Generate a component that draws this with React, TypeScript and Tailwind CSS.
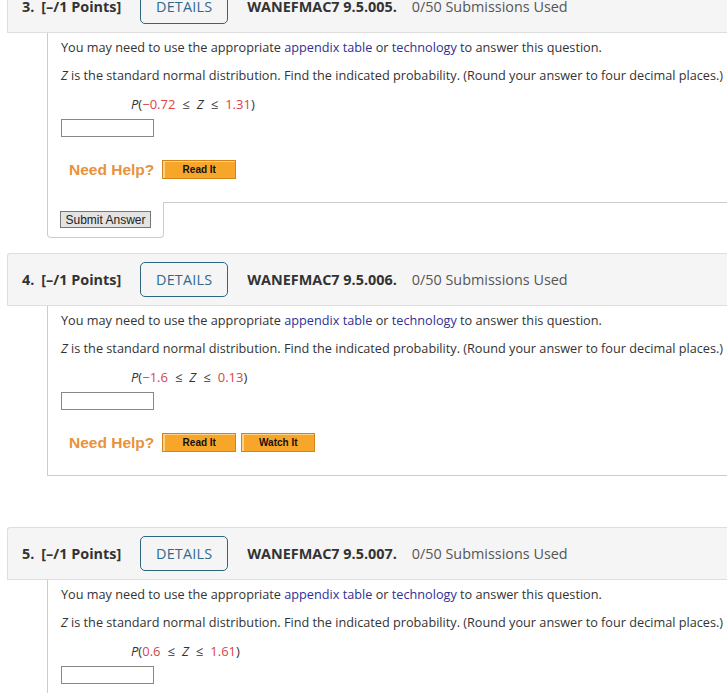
const body = { fontFamily: '"Open Sans", "DejaVu Sans", sans-serif' };
const arial = { fontFamily: '"Liberation Sans", Arial, sans-serif' };

type Q = {
  num: number;
  code: string;
  a: string;
  b: string;
  watch?: boolean;
  submit?: boolean;
};

const questions: Q[] = [
  { num: 3, code: '9.5.005.', a: '−0.72', b: '1.31', submit: true },
  { num: 4, code: '9.5.006.', a: '−1.6', b: '0.13', watch: true },
  { num: 5, code: '9.5.007.', a: '0.6', b: '1.61' },
];

function HelpButton({ label }: { label: string }) {
  return (
    <button
      className="h-[19px] w-[74px] bg-[#f8a62a] border border-[#d2841a] shadow-[inset_2px_1px_0_#fcd28a] text-[10px] font-bold text-[#111] leading-none"
      style={arial}
    >
      {label}
    </button>
  );
}

function Question({ q }: { q: Q }) {
  return (
    <div>
      {/* Header */}
      <div
        className="h-[53px] flex items-center bg-[#f5f5f5] border border-r-0 border-[#dedede] rounded-tl-[3px] pl-[14px] text-[14.4px] text-[#333] whitespace-nowrap"
        style={body}
      >
        <span className="font-bold">{q.num}.</span>
        <span className="font-bold ml-[7px]">[–/1 Points]</span>
        <button className="ml-[19px] h-[35px] w-[88px] shrink-0 rounded-[5px] border border-[#2f6780] text-[#2f6a8f] text-[14.4px] tracking-[0.2px] bg-transparent">
          DETAILS
        </button>
        <span className="font-bold ml-[19px] text-[#333]">WANEFMAC7 {q.code}</span>
        <span className="ml-[15px] text-[#555]">0/50 Submissions Used</span>
      </div>

      {/* Body */}
      <div className="ml-[40px]">
        <div
          className={`border-l border-[#cccccc] pl-[13px] pb-[23px] text-[12.7px] text-[#333] ${q.submit ? '' : 'border-b'}`}
          style={body}
        >
          <p className="leading-[28px] whitespace-nowrap">
            You may need to use the appropriate <a className="text-[#303096]">appendix table</a> or{' '}
            <a className="text-[#303096]">technology</a> to answer this question.
          </p>
          <p className="leading-[28px] whitespace-nowrap">
            <i>Z</i> is the standard normal distribution. Find the indicated probability. (Round your answer to four decimal places.)
          </p>
          <p className="leading-[28px] pl-[70px] pt-[1px] h-[28px] text-[13px]">
            <i>P</i>(<span className="text-[#d8454b]">{q.a}</span>
            <span className="mx-[7px]">≤</span>
            <i>Z</i>
            <span className="mx-[7px]">≤</span>
            <span className="text-[#d8454b]">{q.b}</span>)
          </p>
          <input className="mt-[2px] block h-[18px] w-[93px] border border-[#888] bg-white" />
          <div className="mt-[23px] h-[19px] flex items-center pl-[8px] leading-[19px]">
            <span className="text-[15.5px] font-bold text-[#e8923a] mr-[8px]" style={arial}>
              Need Help?
            </span>
            <div className="flex gap-[5px]">
              <HelpButton label="Read It" />
              {q.watch && <HelpButton label="Watch It" />}
            </div>
          </div>
        </div>
        {q.submit && (
          <div className="flex">
            <div className="w-[117px] h-[36px] border-l border-r border-b border-[#cccccc] rounded-b-[4px] pl-[12px] pt-[9px]">
              <button
                className="block h-[17px] w-[91px] bg-[#e3e3e3] border border-[#777] text-[12px] text-[#222] leading-none"
                style={arial}
              >
                Submit Answer
              </button>
            </div>
            <div className="flex-1 border-t border-[#cccccc]" />
          </div>
        )}
      </div>
    </div>
  );
}

export default function App() {
  return (
    <div className="bg-white min-h-screen overflow-hidden">
      <div className="-mt-[20px] pl-[7px]">
        <Question q={questions[0]} />
        <div className="mt-[15px]">
          <Question q={questions[1]} />
        </div>
        <div className="mt-[51px]">
          <Question q={questions[2]} />
        </div>
      </div>
    </div>
  );
}
